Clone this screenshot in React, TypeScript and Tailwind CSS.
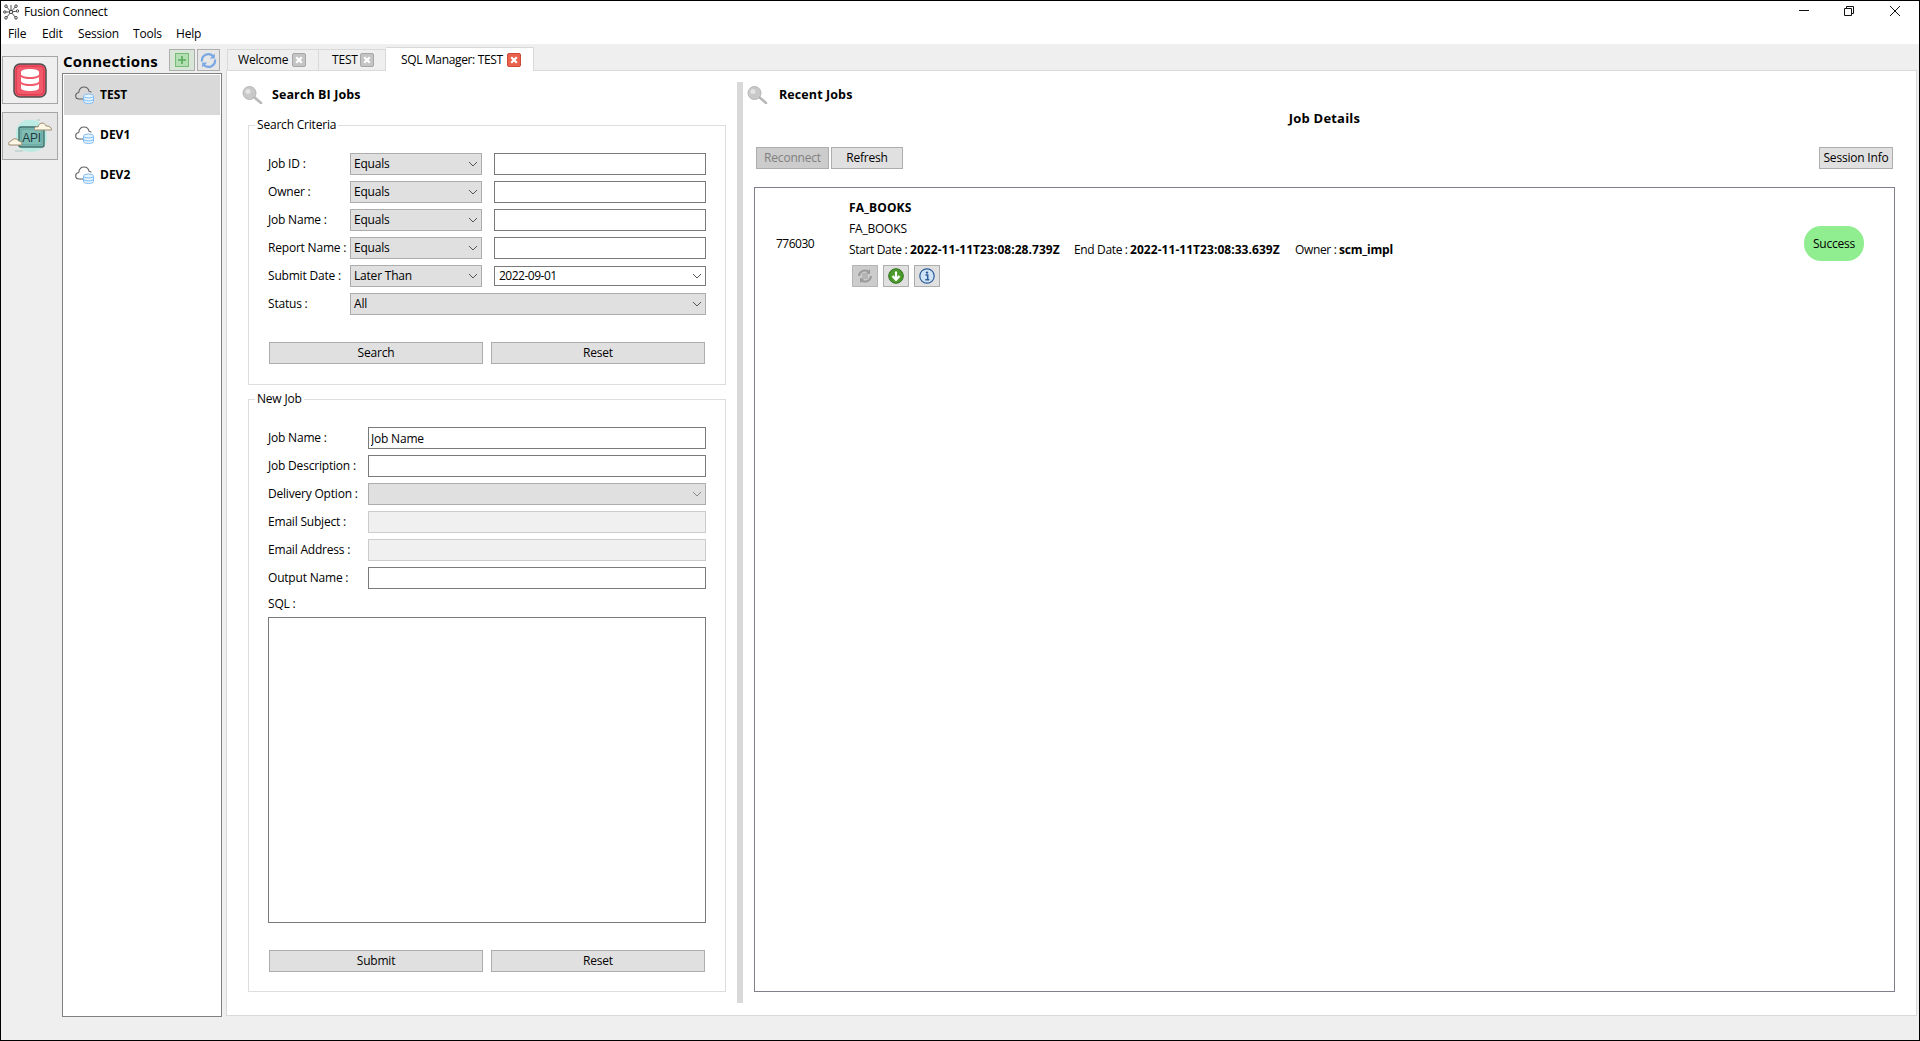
import React from "react";

const Chevron = ({ c = "#555" }: { c?: string }) => (
  <svg width="10" height="6" viewBox="0 0 10 6" className="shrink-0">
    <path d="M1 1l4 4 4-4" fill="none" stroke={c} strokeWidth="1" />
  </svg>
);

const Combo = ({ text, w, disabled }: { text?: string; w: string; disabled?: boolean }) => (
  <div className={`${w} h-[22px] bg-[#e0e0e0] border border-[#adadad] flex items-center justify-between pl-[3px] pr-[3px] shrink-0`}>
    <span>{text}</span>
    <Chevron c={disabled ? "#888" : "#555"} />
  </div>
);

const Field = ({ w, value, disabled }: { w: string; value?: string; disabled?: boolean }) => (
  <input
    readOnly
    value={value ?? ""}
    className={`${w} h-[22px] px-[2px] shrink-0 outline-none border ${disabled ? "bg-[#f0f0f0] border-[#cccccc]" : "bg-white border-[#7a7a7a]"}`}
  />
);

const Btn = ({ children, cls = "" }: { children: React.ReactNode; cls?: string }) => (
  <button className={`h-[22px] bg-[#e0e0e0] border border-[#adadad] flex items-center justify-center shrink-0 ${cls}`}>{children}</button>
);

const CloseBox = ({ red }: { red?: boolean }) => (
  <svg width="14" height="14" viewBox="0 0 14 14" className="shrink-0">
    <rect x="0.5" y="0.5" width="13" height="13" rx="1.5" fill={red ? "#e9634f" : "#c4c4c4"} stroke={red ? "#cf4a36" : "#a6a6a6"} />
    <path d="M4.2 4.2l5.6 5.6M9.8 4.2l-5.6 5.6" stroke="#ffffff" strokeWidth="2.2" />
  </svg>
);

const SearchIcon = () => (
  <svg width="22" height="18" viewBox="0 0 22 18" className="shrink-0">
    <path d="M12 11l7 6" stroke="#b9b9b9" strokeWidth="2.6" strokeLinecap="round" />
    <circle cx="7.5" cy="7" r="6.5" fill="#c9c9c9" stroke="#b5b5b5" />
    <circle cx="6" cy="5.5" r="2.5" fill="#e4e4e4" />
  </svg>
);

const CloudDb = () => (
  <svg width="20" height="18" viewBox="0 0 20 18" className="shrink-0">
    <path d="M9 13H4.200C2.200 13 .7 11.500.7 9.700c0-1.700 1.300-3 3-3.200C4.200 3.200 6.500 1 9 1c2.600 0 4.600 1.800 5.100 4.300.9.100 1.700.4 2.300 1" fill="none" stroke="#5f5f5f" strokeWidth="1.100" />
    <path d="M8.500 10v5.600c0 1 2.200 1.900 5 1.900s5-.9 5-1.900V10" fill="#e8f4ff" stroke="#7dbcf5" />
    <ellipse cx="13.500" cy="10" rx="5" ry="2" fill="#e8f4ff" stroke="#7dbcf5" />
    <path d="M8.500 13c0 1 2.200 1.900 5 1.900s5-.9 5-1.900" fill="none" stroke="#7dbcf5" />
  </svg>
);

const NavDb = () => (
  <svg width="34" height="35" viewBox="0 0 34 35">
    <rect x="1" y="1" width="32" height="33" rx="6" fill="#f2596a" stroke="#4f4f4f" strokeWidth="1.5" />
    <rect x="3.200" y="3.200" width="27.600" height="28.600" rx="4" fill="none" stroke="#d9364a" />
    <path d="M8 9c0-2 4-3 9-3s9 1 9 3v2c0 2-4 3-9 3s-9-1-9-3z" fill="#fff" />
    <path d="M8 14c2 1.500 5 2 9 2s7-.5 9-2v4c0 2-4 3-9 3s-9-1-9-3z" fill="#fff" />
    <path d="M8 21c2 1.500 5 2 9 2s7-.5 9-2v4c0 2-4 3-9 3s-9-1-9-3z" fill="#fff" />
  </svg>
);

const NavApi = () => (
  <svg width="44" height="36" viewBox="0 0 44 36">
    <path d="M8 14C9 6 15 1 24 2c6 .5 8 3 11 6 4 4 5 11 3 17-3 6-9 9-15 9-8 0-13-4-15-10z" fill="#bcebe3" />
    <rect x="11" y="9" width="25" height="20" rx="2" fill="#86c5bb" stroke="#3f6f6c" strokeWidth="1.400" />
    <rect x="13" y="11" width="21" height="16" fill="#7fbdb4" stroke="#4f8a85" strokeWidth=".6" />
    <text x="23.500" y="23.500" textAnchor="middle" fontSize="12" fontFamily="'Liberation Sans',sans-serif" fill="#1f3d45">API</text>
    <path d="M27 12c-1.500-2 .5-4 3-3 1-5 7-5 8-1 3-.5 5.500 1.500 5.500 4z" fill="#fff7e6" stroke="#9c8a70" />
    <path d="M1 27c-1-3 1-4 2.500-4 1-3 6-3 7 0 2 0 3.500 1.500 3.500 4z" fill="#fff7e6" stroke="#9c8a70" />
    <path d="M7 33h8M29 2h3" stroke="#a8c8c0" />
  </svg>
);

const AppLogo = () => (
  <svg width="16" height="16" viewBox="0 0 16 16" className="shrink-0">
    <g stroke="#555" strokeWidth="1" fill="none">
      <path d="M8 8L3 2M8 8l5-6M8 8L1 8M8 8l7-1M8 8l-5 6M8 8l5 6M8 8V1" />
    </g>
    <g fill="#fff" stroke="#444" strokeWidth="1">
      <circle cx="8" cy="8" r="1.600" />
      <circle cx="3" cy="2.200" r="1.300" />
      <circle cx="13" cy="2.200" r="1.300" />
      <circle cx="1.800" cy="8" r="1.200" />
      <circle cx="14.500" cy="7" r="1.200" />
      <circle cx="3" cy="13.800" r="1.300" />
      <circle cx="13" cy="13.800" r="1.300" />
    </g>
  </svg>
);

const Row = ({ label, children, w }: { label: string; children: React.ReactNode; w: string }) => (
  <div className="flex items-center h-[22px]">
    <span className={`${w} shrink-0 whitespace-nowrap`}>{label}</span>
    {children}
  </div>
);

const Legend = ({ children }: { children: React.ReactNode }) => (
  <legend className="-ml-[13px] px-[2px] h-[16px] leading-[16px]">{children}</legend>
);

const Tab = ({ label, cls, gap, red }: { label: string; cls: string; gap: string; red?: boolean }) => (
  <div className={`flex items-center border border-[#d9d9d9] whitespace-nowrap ${cls}`}>
    <span className={gap}>{label}</span>
    <CloseBox red={red} />
  </div>
);

export default function App() {
  return (
    <div className="w-[1920px] h-[1041px] flex flex-col bg-[#efefef] border border-black overflow-hidden text-[12px] leading-[16px] tracking-[-0.2px] text-black font-['Open_Sans',sans-serif]">
      <div className="h-[21px] bg-white flex items-center shrink-0">
        <div className="ml-[2px] mr-[5px] flex"><AppLogo /></div>
        <span className="flex-1">Fusion Connect</span>
        <div className="flex items-center -mt-[2px]">
          <svg width="12" height="12" viewBox="0 0 12 12" className="mr-[33px]"><path d="M1 5.500h10" stroke="#111" /></svg>
          <svg width="12" height="12" viewBox="0 0 12 12" className="mr-[34px]"><path d="M1.500 3.500h7v7h-7zM3.500 3.500v-2h7v7h-2" fill="none" stroke="#111" /></svg>
          <svg width="12" height="12" viewBox="0 0 12 12" className="mr-[18px]"><path d="M1 1l10 10M11 1L1 11" stroke="#111" /></svg>
        </div>
      </div>
      <div className="h-[22px] bg-white flex items-center shrink-0 pl-[7px] pt-[1px]">
        <span className="w-[34px]">File</span>
        <span className="w-[36px]">Edit</span>
        <span className="w-[55px]">Session</span>
        <span className="w-[43px]">Tools</span>
        <span>Help</span>
      </div>

      <div className="flex-1 flex min-h-0">
        <div className="w-[57px] pl-[1px] pt-[12px] flex flex-col gap-[8px] shrink-0">
          <button className="w-[56px] h-[48px] border border-[#a6a6a6] bg-[#efefef] flex items-center justify-center"><NavDb /></button>
          <button className="w-[56px] h-[48px] border border-[#a6a6a6] bg-[#e6e6e6] flex items-center justify-center"><NavApi /></button>
        </div>

        <div className="w-[160px] ml-[4px] flex flex-col shrink-0 pb-[23px]">
          <div className="h-[29px] flex items-start shrink-0">
            <span className="mt-[8px] ml-[1px] w-[106px] text-[15px] leading-[18px] font-bold tracking-[0.2px]">Connections</span>
            <div className="mt-[5px] w-[26px] h-[22px] border border-[#adadad] bg-[#d7e6d7] flex items-center justify-center">
              <svg width="14" height="14" viewBox="0 0 14 14"><rect x=".5" y=".5" width="13" height="13" fill="#b3e0b3" stroke="#78bb78" /><path d="M7 3v8M3 7h8" stroke="#5aa95a" strokeWidth="1.600" /></svg>
            </div>
            <div className="mt-[5px] ml-[2px] w-[23px] h-[22px] border border-[#adadad] bg-[#e6e6e6] flex items-center justify-center">
              <svg width="17" height="17" viewBox="0 0 17 17"><path d="M2 9.500A6.500 6.500 0 0 1 13 4M15 7.500A6.500 6.500 0 0 1 4 13" fill="none" stroke="#7aa8e4" strokeWidth="2.200" /><path d="M14.800 1.500v5h-5zM2.200 15.500v-5h5z" fill="#7aa8e4" /></svg>
            </div>
          </div>
          <div className="flex-1 border border-[#808080] p-[1px] bg-white flex flex-col font-bold tracking-normal">
            {["TEST", "DEV1", "DEV2"].map((n, i) => (
              <div key={n} className={`h-[40px] flex items-center pl-[11px] gap-[5px] ${i === 0 ? "bg-[#d9d9d9]" : ""}`}>
                <CloudDb />
                <span>{n}</span>
              </div>
            ))}
          </div>
        </div>

        <div className="flex-1 ml-[4px] mr-[2px] flex flex-col min-w-0 pb-[24px]">
          <div className="h-[26px] flex items-end pl-[1px] shrink-0 relative z-10">
            <Tab label="Welcome" cls="w-[92px] h-[21px] border-b-0 pl-[10px]" gap="w-[54px]" />
            <Tab label="TEST" cls="w-[67px] h-[21px] border-b-0 border-l-0 pl-[13px]" gap="w-[28px]" />
            <Tab label="SQL Manager: TEST" cls="w-[148px] h-[24px] bg-white border-b-0 border-l-0 pl-[15px] -mb-[1px] tracking-[-0.35px]" gap="w-[106px]" red />
          </div>
          <div className="flex-1 border border-[#d9d9d9] bg-white flex min-h-0">
            <div className="w-[510px] pl-[21px] pr-[11px] shrink-0 flex flex-col">
              <div className="h-[46px] flex items-center shrink-0 -ml-[6px] pt-[2px]">
                <SearchIcon />
                <span className="ml-[8px] font-bold text-[12.5px] tracking-[0.1px]">Search BI Jobs</span>
              </div>
              <fieldset className="border border-[#dddddd] px-[19px] pt-[20px] pb-[19px] h-[268px]">
                <Legend>Search Criteria</Legend>
                <div className="flex flex-col gap-[6px]">
                  {["Job ID :", "Owner :", "Job Name :", "Report Name :"].map((l) => (
                    <Row key={l} label={l} w="w-[82px]">
                      <Combo text="Equals" w="w-[132px]" />
                      <Field w="w-[212px] ml-[12px]" />
                    </Row>
                  ))}
                  <Row label="Submit Date :" w="w-[82px]">
                    <Combo text="Later Than" w="w-[132px]" />
                    <div className="w-[212px] ml-[12px] h-[20px] border border-[#7a7a7a] bg-white flex items-center justify-between pl-[4px] pr-[3px]">
                      <span className="tracking-[-0.5px]">2022-09-01</span>
                      <Chevron />
                    </div>
                  </Row>
                  <Row label="Status :" w="w-[82px]">
                    <Combo text="All" w="w-[356px]" />
                  </Row>
                </div>
                <div className="flex gap-[8px] mt-[27px] pl-[1px]">
                  <Btn cls="w-[214px]">Search</Btn>
                  <Btn cls="w-[214px]">Reset</Btn>
                </div>
              </fieldset>
              <fieldset className="border border-[#dddddd] px-[19px] pt-[20px] pb-[18px] mt-[6px] h-[601px]">
                <Legend>New Job</Legend>
                <div className="flex flex-col gap-[6px]">
                  <Row label="Job Name :" w="w-[100px]"><Field w="w-[338px]" value="Job Name" /></Row>
                  <Row label="Job Description :" w="w-[100px]"><Field w="w-[338px]" /></Row>
                  <Row label="Delivery Option :" w="w-[100px]"><Combo w="w-[338px]" disabled /></Row>
                  <Row label="Email Subject :" w="w-[100px]"><Field w="w-[338px]" disabled /></Row>
                  <Row label="Email Address :" w="w-[100px]"><Field w="w-[338px]" disabled /></Row>
                  <Row label="Output Name :" w="w-[100px]"><Field w="w-[338px]" /></Row>
                </div>
                <div className="h-[16px] mt-[7px] mb-[5px]">SQL :</div>
                <textarea readOnly className="block w-[438px] h-[306px] border border-[#7a7a7a] bg-white outline-none resize-none" />
                <div className="flex gap-[8px] mt-[27px] pl-[1px]">
                  <Btn cls="w-[214px]">Submit</Btn>
                  <Btn cls="w-[214px]">Reset</Btn>
                </div>
              </fieldset>
            </div>

            <div className="w-[6px] bg-[#d9d9d9] mt-[11px] mb-[12px] shrink-0" />

            <div className="flex-1 flex flex-col pr-[21px] min-w-0">
              <div className="h-[46px] flex items-center pl-[4px] pt-[2px] shrink-0">
                <SearchIcon />
                <span className="ml-[10px] font-bold text-[12.5px] tracking-[0.1px]">Recent Jobs</span>
              </div>
              <div className="ml-[11px] flex flex-col flex-1 mb-[23px] min-h-0">
                <div className="text-center font-bold text-[13px] tracking-[0.2px] h-[16px] mt-[-7px]">Job Details</div>
                <div className="flex justify-between mt-[21px] pl-[2px] pr-[2px] shrink-0">
                  <div className="flex gap-[2px]">
                    <Btn cls="w-[73px] !bg-[#cccccc] text-[#808080]">Reconnect</Btn>
                    <Btn cls="w-[72px]">Refresh</Btn>
                  </div>
                  <Btn cls="w-[74px]">Session Info</Btn>
                </div>
                <div className="flex-1 mt-[18px] border border-[#80808c] flex items-start">
                  <div className="flex items-center w-full pt-[12px] pl-[21px] pr-[30px]">
                    <span className="w-[73px] shrink-0 tracking-[-0.5px]">776030</span>
                    <div className="flex flex-col flex-1">
                      <div className="font-bold h-[16px] tracking-[0.1px]">FA_BOOKS</div>
                      <div className="h-[16px] mt-[5px]">FA_BOOKS</div>
                      <div className="h-[16px] mt-[5px] flex whitespace-nowrap">
                        <span className="w-[61px] tracking-[-0.35px]">Start Date :</span>
                        <span className="w-[164px] font-bold tracking-[0.05px]">2022-11-11T23:08:28.739Z</span>
                        <span className="w-[56px] tracking-[-0.35px]">End Date :</span>
                        <span className="w-[165px] font-bold tracking-[0.05px]">2022-11-11T23:08:33.639Z</span>
                        <span className="w-[44px] tracking-[-0.35px]">Owner :</span>
                        <span className="font-bold">scm_impl</span>
                      </div>
                      <div className="flex gap-[5px] mt-[7px] pl-[3px]">
                        <div className="w-[26px] h-[22px] bg-[#cccccc] border border-[#b5b5b5] flex items-center justify-center">
                          <svg width="16" height="16" viewBox="0 0 16 16"><path d="M2 8a6 6 0 0 1 10-4M14 8a6 6 0 0 1-10 4" fill="none" stroke="#9a9a9a" strokeWidth="2" /><path d="M13 1v5H8zM3 15v-5h5z" fill="#9a9a9a" /><rect x="5" y="5" width="6" height="6" fill="#b5b5b5" /></svg>
                        </div>
                        <div className="w-[26px] h-[22px] bg-[#e0e0e0] border border-[#adadad] flex items-center justify-center">
                          <svg width="16" height="16" viewBox="0 0 16 16"><circle cx="8" cy="8" r="7.300" fill="#4a9a2c" stroke="#2f6e1a" /><path d="M8 3.500v8M4.500 8L8 11.800 11.500 8" fill="none" stroke="#fff" strokeWidth="2.200" /></svg>
                        </div>
                        <div className="w-[26px] h-[22px] bg-[#e0e0e0] border border-[#adadad] flex items-center justify-center">
                          <svg width="16" height="16" viewBox="0 0 16 16"><circle cx="8" cy="8" r="7.200" fill="#cfe3f5" stroke="#2c5c9a" strokeWidth="1.200" /><circle cx="8" cy="4.600" r="1.200" fill="#2c5c9a" /><path d="M6.500 7h2.200v4.500M6.300 11.800h4" fill="none" stroke="#2c5c9a" strokeWidth="1.500" /></svg>
                        </div>
                      </div>
                    </div>
                    <div className="w-[60px] h-[35px] rounded-[17px] bg-[#90ee90] flex items-center justify-center shrink-0">Success</div>
                  </div>
                </div>
              </div>
            </div>
          </div>
        </div>
      </div>
    </div>
  );
}
